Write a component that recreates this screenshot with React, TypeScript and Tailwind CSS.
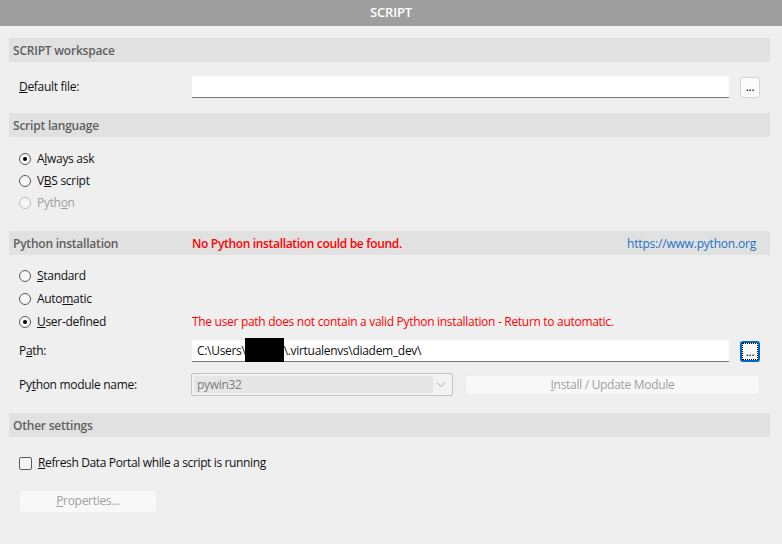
import React from "react";

const font = "font-['Open_Sans','Liberation_Sans',sans-serif]";

function Section({ title, children }: { title: string; children?: React.ReactNode }) {
  return (
    <div className="flex h-6 items-center bg-[#e1e1e1] pl-1 pt-px text-[12px] font-semibold text-[#5f5f5f]">
      <span className="w-[179px] shrink-0 tracking-[-0.22px]">{title}</span>
      {children}
    </div>
  );
}

function Radio({ checked, disabled }: { checked?: boolean; disabled?: boolean }) {
  return (
    <span className={`flex h-[12px] w-[12px] shrink-0 items-center justify-center rounded-full border bg-[#f6f6f6] ${disabled ? "border-[#bdbdbd]" : "border-[#5a5a5a]"}`}>
      {checked && <span className="h-[4px] w-[4px] rounded-full bg-black" />}
    </span>
  );
}

function RadioRow({ checked, disabled, className, children }: { checked?: boolean; disabled?: boolean; className: string; children: React.ReactNode }) {
  return (
    <div className={`flex items-center gap-[6px] pl-[10px] text-[12px] tracking-[-0.3px] ${disabled ? "text-[#a0a0a0]" : "text-[#111]"} ${className}`}>
      <Radio checked={checked} disabled={disabled} />
      <span>{children}</span>
    </div>
  );
}

function Browse({ focused }: { focused?: boolean }) {
  return (
    <button className={`flex h-[21px] w-5 items-start justify-center rounded-[3px] bg-[#fbfbfb] text-[12px] leading-[18px] text-black ${focused ? "border-2 border-[#0067c0] leading-[16px] outline-1 outline-dotted -outline-offset-3 outline-black" : "border border-[#d4d4d4]"}`}>
      ...
    </button>
  );
}

function TextInput({ children }: { children?: React.ReactNode }) {
  return (
    <div className="flex h-[22px] w-[537px] items-center rounded-t-[2px] border-b border-b-[#7a7a7a] bg-white pl-[5px] text-[12px] tracking-[-0.3px] text-[#111]">
      {children}
    </div>
  );
}

export default function App() {
  return (
    <div className={`${font} h-[544px] w-[782px] overflow-hidden bg-[#efefef]`}>
      <div className="flex h-[26px] items-center justify-center bg-[#9e9e9e] text-[13px] font-semibold tracking-[-0.2px] text-white">SCRIPT</div>
      <div className="pl-[9px] pr-[12px] pt-3">
        <Section title="SCRIPT workspace" />
        <div className="mt-[14px] flex items-center pl-[10px] text-[12px] tracking-[-0.3px] text-[#111]">
          <span className="w-[173px] shrink-0"><u>D</u>efault file:</span>
          <TextInput />
          <div className="ml-[11px]"><Browse /></div>
        </div>
        <div className="mt-[15px]"><Section title="Script language" /></div>
        <RadioRow checked className="mt-[14px] h-4">A<u>l</u>ways ask</RadioRow>
        <RadioRow className="mt-[6px] h-4">V<u>B</u>S script</RadioRow>
        <RadioRow disabled className="mt-[6px] h-4">Pyth<u>o</u>n</RadioRow>
        <div className="mt-5">
          <Section title="Python installation">
            <span className="tracking-[-0.33px] text-[#ff0000]">No Python installation could be found.</span>
            <span className="ml-auto mr-[14px] font-normal tracking-[-0.2px] text-[#1a73c8]">https://www.python.org</span>
          </Section>
        </div>
        <RadioRow className="mt-[13px] h-4"><u>S</u>tandard</RadioRow>
        <RadioRow className="mt-[7px] h-4">Auto<u>m</u>atic</RadioRow>
        <div className="mt-[7px] flex h-4 items-center">
          <RadioRow checked className="w-[183px]"><u>U</u>ser-defined</RadioRow>
          <span className="text-[12px] tracking-[-0.3px] text-[#ff0000]">The user path does not contain a valid Python installation - Return to automatic.</span>
        </div>
        <div className="mt-[10px] flex items-center pl-[10px] text-[12px] tracking-[-0.3px] text-[#111]">
          <span className="w-[173px] shrink-0">P<u>a</u>th:</span>
          <TextInput>
            C:\Users\<span className="-ml-px -mt-[2px] h-[24px] w-[39px] self-start bg-black" />\.virtualenvs\diadem_dev\
          </TextInput>
          <div className="ml-[11px]"><Browse focused /></div>
        </div>
        <div className="mt-[11px] flex items-center pl-[10px] text-[12px] tracking-[-0.3px] text-[#111]">
          <span className="w-[172px] shrink-0">Py<u>t</u>hon module name:</span>
          <div className="flex h-[23px] w-[262px] items-center justify-between rounded-[2px] border border-[#c4c4c4] bg-[#f2f2f2] p-[2px] pr-[6px]">
            <span className="flex h-full w-[239px] items-center bg-[#e6e6e6] pl-[3px] text-[#7c7c7c]">pywin32</span>
            <svg width="10" height="6" viewBox="0 0 10 6" fill="none" stroke="#a8a8a8"><path d="M1 .5 5 4.5 9 .5" /></svg>
          </div>
          <button className="ml-3 h-5 w-[295px] rounded-[3px] border border-[#ececec] bg-[#f8f8f8] text-[12px] tracking-[-0.3px] text-[#a0a0a0]"><u>I</u>nstall / Update Module</button>
        </div>
        <div className="mt-[17px]"><Section title="Other settings" /></div>
        <div className="mt-[17px] flex items-center gap-[6px] pl-[10px] text-[12px] tracking-[-0.36px] text-[#111]">
          <span className="h-[13px] w-[13px] shrink-0 rounded-[2px] border border-[#5a5a5a] bg-[#f6f6f6]" />
          <span><u>R</u>efresh Data Portal while a script is running</span>
        </div>
        <div className="mt-[15px] pl-[10px]">
          <button className="h-[23px] w-[138px] rounded-[3px] border border-[#ececec] bg-[#f8f8f8] text-[12px] tracking-[-0.3px] text-[#a0a0a0]"><u>P</u>roperties...</button>
        </div>
      </div>
    </div>
  );
}
